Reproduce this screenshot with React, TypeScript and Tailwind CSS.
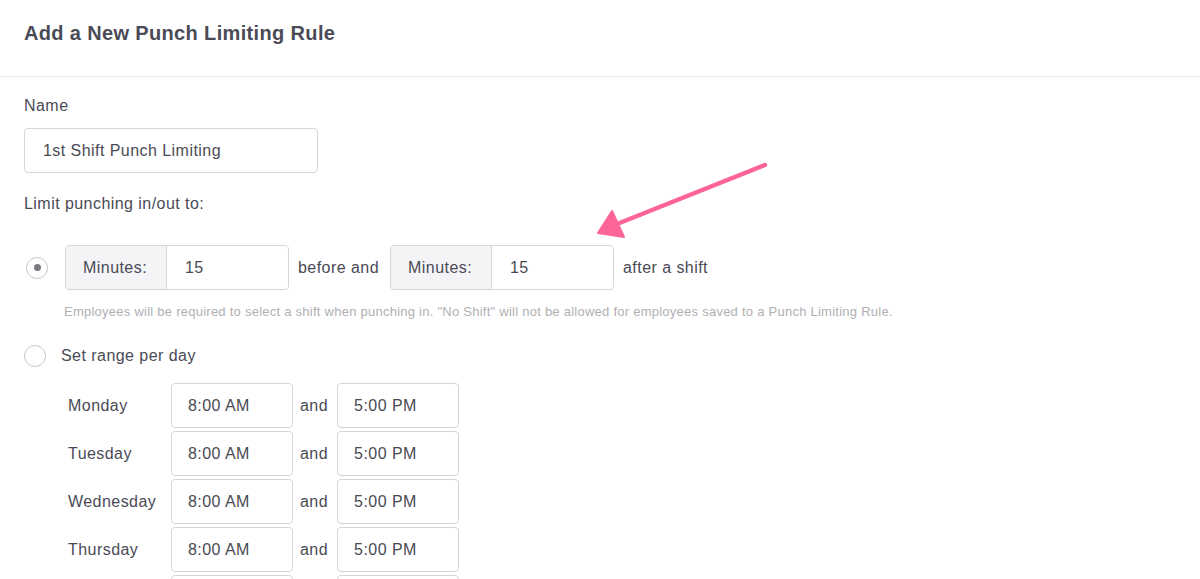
import React from 'react';

const days = ['Monday', 'Tuesday', 'Wednesday', 'Thursday', 'Friday'];

function MinutesGroup({ value }: { value: string }) {
  return (
    <div className="flex h-[45px] rounded-[4px] border border-[#d6d6d8]">
      <div className="flex w-[100px] items-center rounded-l-[4px] bg-[#f4f4f6] pl-[17px]">Minutes:</div>
      <div className="flex w-[122px] items-center rounded-r-[4px] border-l border-[#d6d6d8] bg-white pl-[18px]">{value}</div>
    </div>
  );
}

function TimeBox({ value }: { value: string }) {
  return (
    <div className="flex h-[45px] w-[122px] items-center rounded-[4px] border border-[#d6d6d8] pl-[16px]">{value}</div>
  );
}

export default function App() {
  return (
    <div
      className="relative h-[579px] w-[1200px] overflow-hidden bg-white text-[16px] tracking-[0.45px] text-[#4a4a55]"
      style={{ fontFamily: '"Liberation Sans", Arial, sans-serif' }}
    >
      {/* header */}
      <div className="h-[77px] border-b border-[#e9e9ec] pl-[24px] pt-[21px]">
        <h1 className="text-[20px] font-semibold leading-[24px] tracking-[0.35px] text-[#4b4b57]">Add a New Punch Limiting Rule</h1>
      </div>

      <div className="pl-[24px] pt-[17px]">
        <div className="leading-[24px]">Name</div>
        <div className="mt-[10px] flex h-[45px] w-[294px] items-center rounded-[4px] border border-[#d6d6d8] pl-[18px]">
          1st Shift Punch Limiting
        </div>

        <div className="mt-[19px] leading-[24px]">Limit punching in/out to:</div>

        {/* option 1 */}
        <div className="mt-[29px] flex items-center">
          <div className="ml-[2px] flex h-[22px] w-[22px] items-center justify-center rounded-full border border-[#c9c9cc]">
            <div className="h-[7px] w-[7px] rounded-full bg-[#7a7a80]" />
          </div>
          <div className="ml-[17px] flex items-center">
            <MinutesGroup value="15" />
            <span className="ml-[9px] mr-[11px]">before and</span>
            <MinutesGroup value="15" />
            <span className="ml-[9px]">after a shift</span>
          </div>
        </div>
        <p className="mt-[13px] pl-[40px] text-[13px] leading-[18px] tracking-[0.25px] text-[#b0b0b4]">
          Employees will be required to select a shift when punching in. "No Shift" will not be allowed for employees saved to a Punch Limiting Rule.
        </p>

        {/* option 2 */}
        <div className="mt-[23px] flex items-center leading-[24px]">
          <div className="h-[22px] w-[22px] rounded-full border border-[#c9c9cc]" />
          <span className="ml-[15px]">Set range per day</span>
        </div>

        <div className="mt-[15px] flex flex-col gap-[3px] pl-[44px]">
          {days.map((d) => (
            <div key={d} className="flex items-center">
              <span className="w-[103px]">{d}</span>
              <TimeBox value="8:00 AM" />
              <span className="ml-[7px] mr-[9px]">and</span>
              <TimeBox value="5:00 PM" />
            </div>
          ))}
        </div>
      </div>

      {/* annotation arrow */}
      <svg className="absolute left-0 top-0" width="1200" height="579" viewBox="0 0 1200 579" fill="none">
        <line x1="765" y1="165" x2="612" y2="226" stroke="#fd6598" strokeWidth="4.5" strokeLinecap="round" />
        <path d="M598 233 L612 211 L624 237 Z" fill="#fd6598" stroke="#fd6598" strokeWidth="2" strokeLinejoin="round" />
      </svg>
    </div>
  );
}
